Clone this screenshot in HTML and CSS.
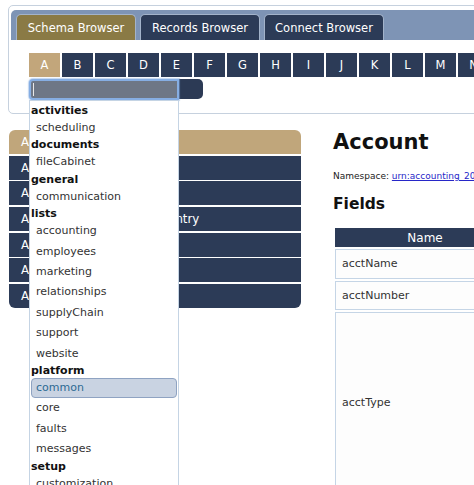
FILE: index.html
```html
<!DOCTYPE html>
<html lang="en">
<head>
    <meta charset="UTF-8">
    <title>Schema Browser</title>
    <link rel="stylesheet" href="styles.css">
</head>
<body>

<div class="page">
    <div class="browser-tabs">
        <div class="tab-nav">
            <div class="tab active">Schema Browser</div>
            <div class="tab">Records Browser</div>
            <div class="tab">Connect Browser</div>
        </div>
        <div class="tab-panel">
            <div class="letters">
                <span class="letter current">A</span>
                <span class="letter">B</span>
                <span class="letter">C</span>
                <span class="letter">D</span>
                <span class="letter">E</span>
                <span class="letter">F</span>
                <span class="letter">G</span>
                <span class="letter">H</span>
                <span class="letter">I</span>
                <span class="letter">J</span>
                <span class="letter">K</span>
                <span class="letter">L</span>
                <span class="letter">M</span>
                <span class="letter">N</span>
                <span class="letter">O</span>
                <span class="letter">P</span>
                <span class="letter">Q</span>
                <span class="letter">R</span>
                <span class="letter">S</span>
                <span class="letter">T</span>
            </div>
            <div class="search">
                <div class="search-field"><span class="caret"></span></div>
                <div class="search-btn"></div>

                <!-- namespace autocomplete, grouped by package -->
                <ul class="menu">
                    <li class="menu-group">activities</li>
                    <li class="menu-item">scheduling</li>
                    <li class="menu-group">documents</li>
                    <li class="menu-item">fileCabinet</li>
                    <li class="menu-group">general</li>
                    <li class="menu-item">communication</li>
                    <li class="menu-group">lists</li>
                    <li class="menu-item">accounting</li>
                    <li class="menu-item">employees</li>
                    <li class="menu-item">marketing</li>
                    <li class="menu-item">relationships</li>
                    <li class="menu-item">supplyChain</li>
                    <li class="menu-item">support</li>
                    <li class="menu-item">website</li>
                    <li class="menu-group">platform</li>
                    <li class="menu-item focus">common</li>
                    <li class="menu-item">core</li>
                    <li class="menu-item">faults</li>
                    <li class="menu-item">messages</li>
                    <li class="menu-group">setup</li>
                    <li class="menu-item">customization</li>
                    <li class="menu-group">transactions</li>
                    <li class="menu-item">bank</li>
                </ul>
            </div>
        </div>
    </div>

    <div class="layout">
        <div class="record-list">
            <div class="record current">Account</div>
            <div class="record">AccountingPeriod</div>
            <div class="record">Address</div>
            <div class="record">AdvInterCompanyJournalEntry</div>
            <div class="record">AmortizationSchedule</div>
            <div class="record">AmortizationTemplate</div>
            <div class="record">AssemblyBuild</div>
        </div>

        <div class="record-detail">
            <h1>Account</h1>
            <p class="namespace">Namespace: <a href="#">urn:accounting_2017_1.lists.webservices.netsuite.com</a></p>
            <h2>Fields</h2>
            <table class="fields">
                <tr>
                    <th class="col-name">Name</th>
                    <th>Type</th>
                    <th>Cardinality</th>
                    <th>Label</th>
                    <th>Required</th>
                </tr>
                <tr>
                    <td>acctName</td>
                    <td>string</td>
                    <td>0..1</td>
                    <td>Name</td>
                    <td>T</td>
                </tr>
                <tr>
                    <td>acctNumber</td>
                    <td>string</td>
                    <td>0..1</td>
                    <td>Number</td>
                    <td>F</td>
                </tr>
                <tr class="tall">
                    <td>acctType</td>
                    <td>AccountType</td>
                    <td>0..1</td>
                    <td>Type</td>
                    <td>T</td>
                </tr>
            </table>
        </div>
    </div>
</div>

</body>
</html>
```

FILE: styles.css
```css
html, body {
    margin: 0;
    padding: 0;
    overflow: hidden;
}

body {
    font-family: "DejaVu Sans", Verdana, sans-serif;
    font-size: 11px;
    color: #333;
    background-color: #ffffff;
}

.page {
    width: 1100px;
}

/* top tab widget */
.browser-tabs {
    margin: 5px 0 0 8px;
    padding: 4px 2px 0;
    border: 1px solid #c6d1de;
    border-radius: 5px;
}

.tab-nav {
    display: flex;
    gap: 4px;
    height: 26px;
    padding: 4px 5px 0;
    background-color: #7e94b5;
    border-radius: 5px 5px 0 0;
}

.tab {
    width: 120px;
    height: 26px;
    box-sizing: border-box;
    display: flex;
    align-items: center;
    justify-content: center;
    font-size: 11.5px;
    color: #fff;
    background-color: #2c3b57;
    border: 1px solid #a3b3ca;
    border-bottom: none;
    border-radius: 5px 5px 0 0;
}

.tab.active {
    background-color: #8a7a45;
}

.tab-panel {
    padding: 13px 18px 13px;
}

.letters {
    display: flex;
    gap: 2px;
}

.letter {
    flex: none;
    width: 31px;
    height: 24px;
    display: flex;
    align-items: center;
    justify-content: center;
    font-size: 11.5px;
    color: #fff;
    background-color: #2c3b57;
}

.letter.current {
    background-color: #c2a67b;
}

/* search combo */
.search {
    position: relative;
    display: flex;
    margin-top: 2px;
}

.search-field {
    position: relative;
    width: 150px;
    height: 21px;
    box-sizing: border-box;
    background-color: #6e7786;
    border: 2px solid #86aee3;
    border-radius: 4px 0 0 4px;
    box-shadow: 0 0 1px 1px rgba(134, 174, 227, 0.5);
}

.caret {
    position: absolute;
    left: 2px;
    top: 2px;
    width: 1px;
    height: 13px;
    background-color: #e8e8e8;
}

.search-btn {
    width: 24px;
    height: 20px;
    background-color: #2c3a55;
    border-radius: 0 5px 5px 0;
}

.menu {
    position: absolute;
    top: 21px;
    left: 0;
    z-index: 5;
    width: 150px;
    box-sizing: border-box;
    margin: 0;
    padding: 3px 1px;
    list-style: none;
    background-color: #fff;
    border: 1px solid #c5d4e4;
}

.menu-group {
    font-weight: bold;
    line-height: 14px;
    color: #111;
}

.menu-item {
    line-height: 18.4px;
    padding-left: 4px;
    color: #333;
    border: 1px solid transparent;
    border-radius: 4px;
}

.menu-item.focus {
    color: #2d6a93;
    background-color: #c9d3e2;
    border-color: #8fa3c2;
}

/* records + detail */
.layout {
    display: flex;
    align-items: flex-start;
    gap: 32px;
    padding: 16px 0 0 9px;
}

.record-list {
    flex: none;
    width: 292px;
    display: flex;
    flex-direction: column;
    gap: 1.7px;
    border-radius: 6px;
    overflow: hidden;
}

.record {
    height: 24px;
    line-height: 24px;
    padding-left: 12px;
    font-size: 11.8px;
    color: #fff;
    white-space: nowrap;
    background-color: #2c3b57;
}

.record.current {
    background-color: #c0a67b;
}

.record-detail h1 {
    margin: 0;
    font-size: 21px;
    line-height: 25px;
    color: #111;
}

.namespace {
    margin: 15px 0 0;
    font-size: 9px;
    line-height: 12px;
    color: #222;
}

.namespace a {
    color: #2727c8;
}

.record-detail h2 {
    margin: 12px 0 0;
    font-size: 15.5px;
    line-height: 20px;
    color: #111;
}

.fields {
    margin-top: 12px;
    border-spacing: 2px;
}

.fields th {
    width: 130px;
    height: 19px;
    padding: 0;
    font-size: 12px;
    font-weight: normal;
    color: #fff;
    background-color: #2c3b57;
}

.fields th.col-name {
    width: 180px;
}

.fields td {
    padding: 8px 6px;
    line-height: 11.5px;
    color: #333;
    background-color: #fdfdfd;
    border: 1px solid #c5d5e6;
}

.fields tr.tall td {
    height: 164px;
}
```
